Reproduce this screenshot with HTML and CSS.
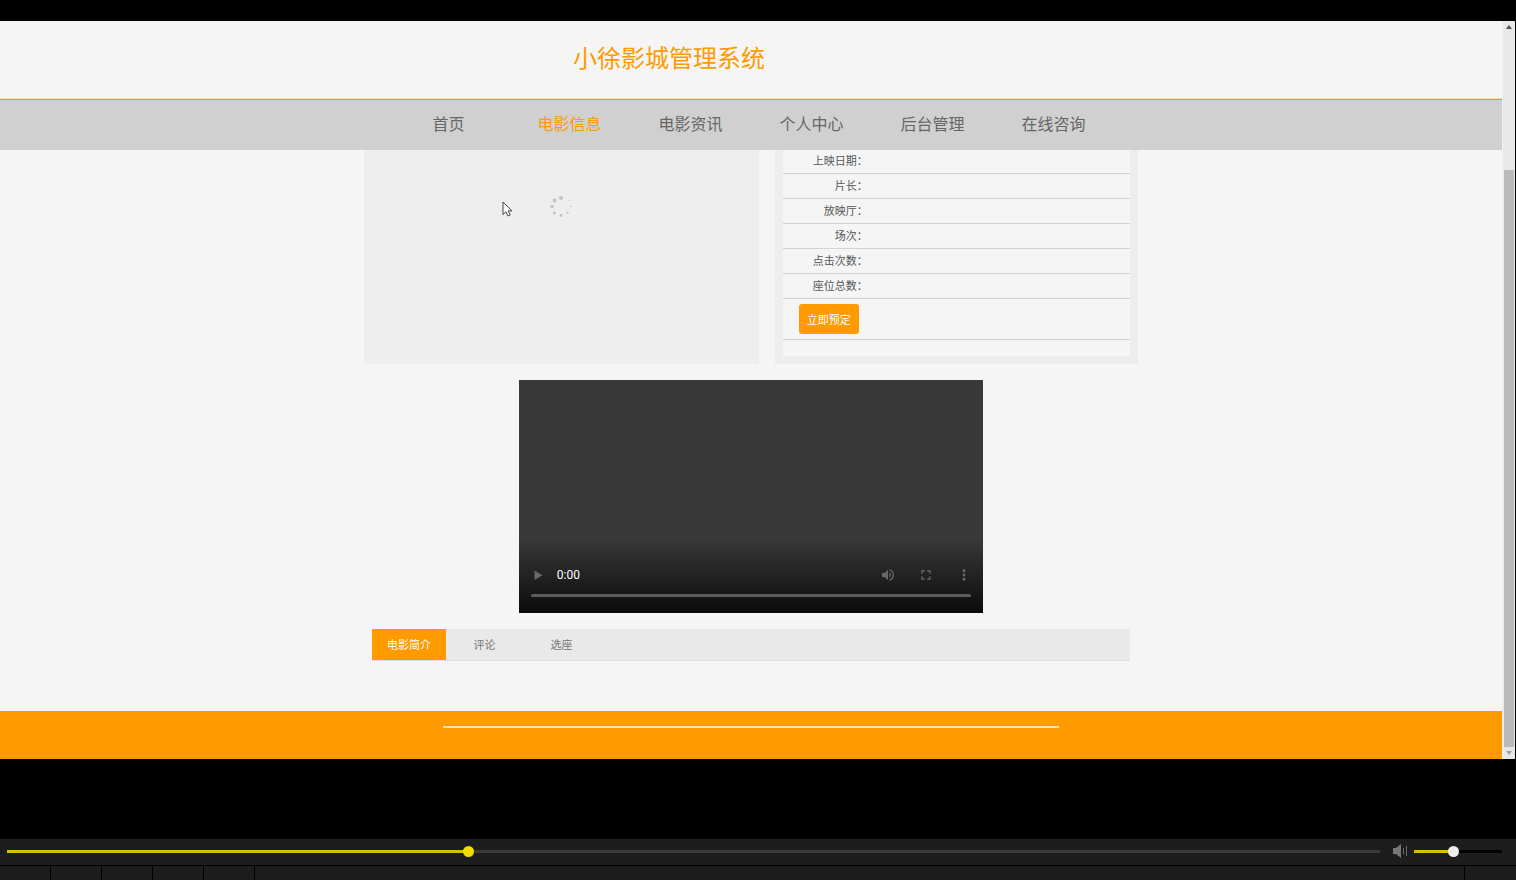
FILE: index.html
```html
<!DOCTYPE html>
<html lang="zh-CN">
<head>
<meta charset="utf-8">
<meta name="viewport" content="width=device-width, initial-scale=1">
<title>小徐影城管理系统</title>
<link rel="stylesheet" href="styles.css">
</head>
<body>
<div class="stage">
  <div class="viewport">
    <div class="page">
      <header class="header"><h1 class="brand">小徐影城管理系统</h1></header>
      <nav class="nav">
        <a href="#">首页</a>
        <a href="#" class="current">电影信息</a>
        <a href="#">电影资讯</a>
        <a href="#">个人中心</a>
        <a href="#">后台管理</a>
        <a href="#">在线咨询</a>
      </nav>
      <main class="main">
        <div class="detail">
          <section class="poster">
            <svg class="spinner" width="24" height="24" viewBox="0 0 24 24" fill="#c2c2c2">
              <circle cx="12" cy="4" r="2"/><circle cx="5.500" cy="6.500" r="1.900"/><circle cx="3" cy="12.500" r="1.700"/><circle cx="5.500" cy="19" r="1.600"/><circle cx="12" cy="21.500" r="1.400"/><circle cx="18.700" cy="19" r="1.100"/><circle cx="22" cy="12.500" r=".8"/><circle cx="20" cy="6.500" r=".6"/>
            </svg>
            <svg class="cursor" width="11" height="17" viewBox="0 0 11 17">
              <path d="M1 1v12.500l3-2.700 2 4.200 2.200-1-2-4.100H10z" fill="#fff" stroke="#444" stroke-width="1"/>
            </svg>
          </section>
          <section class="info">
            <table class="facts">
              <tr><th scope="row">上映日期：</th><td></td></tr>
              <tr><th scope="row">片长：</th><td></td></tr>
              <tr><th scope="row">放映厅：</th><td></td></tr>
              <tr><th scope="row">场次：</th><td></td></tr>
              <tr><th scope="row">点击次数：</th><td></td></tr>
              <tr><th scope="row">座位总数：</th><td></td></tr>
            </table>
            <div class="booking"><button class="book" type="button">立即预定</button></div>
          </section>
        </div>
        <div class="video">
          <div class="video-bar">
            <button type="button" class="icon" aria-label="播放"><svg width="18" height="18" viewBox="0 0 18 18"><path d="M5.500 4.500v9.500l8-4.750z" fill="#686868"/></svg></button>
            <span class="time">0:00</span>
            <button type="button" class="icon" aria-label="静音"><svg width="16" height="16" viewBox="0 0 24 24" fill="#686868"><path d="M3 9v6h4l5 5V4L7 9zm13.500 3A4.500 4.500 0 0 0 14 7.970v8.050A4.470 4.470 0 0 0 16.500 12zM14 3.230v2.060a7 7 0 0 1 0 13.420v2.060a9 9 0 0 0 0-17.540z"/></svg></button>
            <button type="button" class="icon" aria-label="全屏"><svg width="16" height="16" viewBox="0 0 24 24" fill="#686868"><path d="M7 14H5v5h5v-2H7zm-2-4h2V7h3V5H5zm12 7h-3v2h5v-5h-2zM14 5v2h3v3h2V5z"/></svg></button>
            <button type="button" class="icon" aria-label="更多"><svg width="16" height="16" viewBox="0 0 24 24" fill="#686868"><circle cx="12" cy="5.500" r="2.200"/><circle cx="12" cy="12" r="2.200"/><circle cx="12" cy="18.500" r="2.200"/></svg></button>
          </div>
          <div class="video-track"></div>
        </div>
        <div class="tabs" role="tablist">
          <button type="button" role="tab" aria-selected="true" class="active">电影简介</button>
          <button type="button" role="tab">评论</button>
          <button type="button" role="tab">选座</button>
        </div>
      </main>
      <footer class="footer"><hr class="rule"></footer>
    </div>
    <div class="scrollbar">
      <svg width="12" height="12" viewBox="0 0 12 12"><path d="M3 8l3-4 3 4z" fill="#505050"/></svg>
      <div class="scroll-thumb"></div>
      <svg width="12" height="12" viewBox="0 0 12 12"><path d="M3 4h6L6 8z" fill="#a0a0a0"/></svg>
    </div>
  </div>
</div>
<div class="player">
  <input class="range seek" type="range" min="0" max="1000" value="335" aria-label="播放进度">
  <svg class="speaker" width="16" height="14" viewBox="0 0 16 14"><path d="M1 4h3l5-4v14l-5-4H1z" fill="#777"/><path d="M11.500 4v6M14.500 2v10" stroke="#6a6a6a" stroke-width="1" fill="none"/></svg>
  <input class="range volume" type="range" min="0" max="1000" value="440" aria-label="音量">
</div>
<div class="dock"><span></span><span></span><span></span><span></span><span></span><span class="wide"></span><span></span></div>
</body>
</html>
```
FILE: styles.css
```css
* { box-sizing: border-box; }
body {
  margin: 0;
  min-height: 100vh;
  display: flex;
  flex-direction: column;
  background: #000;
  font-family: "Noto Sans CJK SC", sans-serif;
}
button { border: 0; margin: 0; padding: 0; font: inherit; background: none; }
.stage { flex: 1; padding: 21px 1px 0 0; }
.viewport { display: flex; }
.page { flex: 1; min-width: 0; background: #f5f5f5; }
.header { padding: 17px 0 24px; border-bottom: 1px solid #f90; box-shadow: 0 -1px #fbdcb0 inset; }
.brand {
  max-width: 774px;
  margin: 0 auto;
  padding-left: 209px;
  font-size: 24px;
  line-height: 37px;
  font-weight: 400;
  color: #ff9a00;
}
.nav { position: relative; z-index: 1; display: flex; justify-content: center; background: #d0d0d0; }
.nav a {
  width: 121px;
  text-align: center;
  font-size: 16px;
  line-height: 46px;
  padding-bottom: 4px;
  color: #666;
  text-decoration: none;
}
.nav .current { color: #ff9a00; }
.main { max-width: 774px; margin: -1px auto 0; padding-bottom: 50px; }
.detail { display: flex; gap: 16px; }
.poster { width: 51%; position: relative; padding-top: 45px; background: #eee; text-align: center; }
.spinner { display: inline-block; }
.cursor { position: absolute; left: 138px; top: 52px; }
.info { flex: 1; border: solid #ededed; border-width: 0 8px 8px; padding-bottom: 16px; }
.facts { width: 100%; border-collapse: separate; border-spacing: 0; font-size: 11px; color: #555; }
.facts th, .facts td { height: 25px; padding: 0 0 1px; border-bottom: 1px solid #d2d2d2; line-height: 23px; }
.facts th { width: 85px; font-weight: 400; text-align: right; }
.booking { padding: 5px 16px; border-bottom: 1px solid #d2d2d2; line-height: 0; }
.book { padding: 0 8px; border-radius: 3px; background: #ff9a00; color: #fff; font-size: 11px; line-height: 30px; }
.video {
  display: flex;
  flex-direction: column;
  justify-content: flex-end;
  width: 60%;
  aspect-ratio: 464 / 233;
  margin: 16px auto;
  padding-bottom: 16px;
  background: linear-gradient(#393939 68%, #222 84%, #0b0b0b);
}
.video-bar { display: flex; align-items: center; height: 32px; }
.icon { width: 38px; height: 32px; display: flex; align-items: center; justify-content: center; }
.time { flex: 1; font: 400 12px/32px Roboto, sans-serif; color: #fff; }
.video-track { height: 3px; margin: 3px 12px 0; border-radius: 2px; background: #5c5c5c; }
.tabs { display: flex; margin: 0 8px; background: #e9e9e9; border-bottom: 1px solid #ddd; }
.tabs button { width: 77px; font-size: 11px; line-height: 31px; color: #777; }
.tabs .active { width: 74px; background: #ff9a00; color: #fff; }
.footer { padding: 15px 0 31px; background: #ff9a00; }
.rule { width: 41%; height: 2px; margin: 0 auto; border: 0; background: #ffe6b4; }
.scrollbar { width: 13px; display: flex; flex-direction: column; align-items: center; background: #e8e8e8; border-left: 1px solid #f1f1f1; }
.scrollbar svg { display: block; }
.scroll-thumb { flex: 1; width: 10px; margin-top: 137px; background: #bababa; }
.player { display: flex; align-items: center; height: 26px; padding: 0 14px 2px 7px; background: #1d1d1d; }
.speaker { margin: 0 6px 0 12px; }
.range { appearance: none; height: 12px; margin: 0; background: none; }
.seek { flex: 1; min-width: 0; }
.volume { width: 88px; }
.range::-webkit-slider-runnable-track { height: 3px; }
.seek::-webkit-slider-runnable-track { background: linear-gradient(to right, #d8c000 33.5%, #3a3a3a 33.5%); }
.volume::-webkit-slider-runnable-track { background: linear-gradient(to right, #d8c000 43.5%, #000 43.5%); }
.range::-webkit-slider-thumb { appearance: none; width: 11px; height: 11px; margin-top: -4px; border-radius: 50%; background: #f5dc00; }
.volume::-webkit-slider-thumb { background: #eee; }
.dock { display: flex; height: 15px; border-top: 1px solid #000; background: #1d1d1d; }
.dock span { width: 51px; border-right: 1px solid #000; }
.dock .wide { flex: 1; }
.dock span:last-child { border-right: 0; }
```
